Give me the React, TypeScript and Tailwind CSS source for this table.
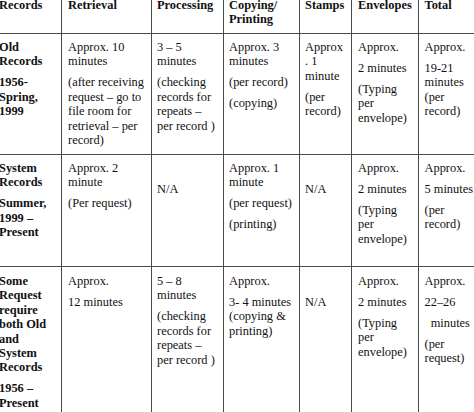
import type { ReactNode } from 'react';

type Paragraphs = string[][];

interface CellSpec {
  paras?: Paragraphs;
  na?: boolean;
}

// column widths include the 1px right rule
const COLS = [
  { width: 'w-[69px]', pad: 'pl-[6px]' },
  { width: 'w-[90px]', pad: 'pl-[6px]' },
  { width: 'w-[72px]', pad: 'pl-[5px]' },
  { width: 'w-[76px]', pad: 'pl-[5px]' },
  { width: 'w-[52px]', pad: 'pl-[5px]' },
  { width: 'w-[67px]', pad: 'pl-[6px]' },
  { width: 'w-[90px]', pad: 'pl-[5.5px]' },
];

const HEADERS: string[][] = [
  ['Records'],
  ['Retrieval'],
  ['Processing'],
  ['Copying/', 'Printing'],
  ['Stamps'],
  ['Envelopes'],
  ['Total'],
];

const ROWS: { height: string; pad: string; cells: CellSpec[] }[] = [
  {
    height: 'h-[121px]',
    pad: 'pt-[6px]',
    cells: [
      { paras: [['Old', 'Records'], ['1956-', 'Spring,', '1999']] },
      {
        paras: [
          ['Approx. 10', 'minutes'],
          ['(after receiving', 'request – go to', 'file room for', 'retrieval – per', 'record)'],
        ],
      },
      { paras: [['3 – 5', 'minutes'], ['(checking', 'records for', 'repeats –', 'per record )']] },
      { paras: [['Approx. 3', 'minutes'], ['(per record)'], ['(copying)']] },
      { paras: [['Approx', '. 1', 'minute'], ['(per', 'record)']] },
      { paras: [['Approx.'], ['2 minutes'], ['(Typing', 'per', 'envelope)']] },
      { paras: [['Approx.'], ['19-21', 'minutes', '(per', 'record)']] },
    ],
  },
  {
    height: 'h-[112px]',
    pad: 'pt-[6px]',
    cells: [
      { paras: [['System', 'Records'], ['Summer,', '1999 –', 'Present']] },
      { paras: [['Approx. 2', 'minute'], ['(Per request)']] },
      { na: true },
      { paras: [['Approx. 1', 'minute'], ['(per request)'], ['(printing)']] },
      { na: true },
      { paras: [['Approx.'], ['2 minutes'], ['(Typing', 'per', 'envelope)']] },
      { paras: [['Approx.'], ['5 minutes'], ['(per', 'record)']] },
    ],
  },
  {
    height: 'h-[160px]',
    pad: 'pt-[7px]',
    cells: [
      {
        paras: [
          ['Some', 'Request', 'require', 'both Old', 'and', 'System', 'Records'],
          ['1956 –', 'Present'],
        ],
      },
      { paras: [['Approx.'], ['12 minutes']] },
      { paras: [['5 – 8', 'minutes'], ['(checking', 'records for', 'repeats –', 'per record )']] },
      { paras: [['Approx.'], ['3- 4 minutes', '(copying &', 'printing)']] },
      { na: true },
      { paras: [['Approx.'], ['2 minutes'], ['(Typing', 'per', 'envelope)']] },
      { paras: [['Approx.'], ['22–26'], ['\u00a0\u00a0minutes'], ['(per', 'request)']] },
    ],
  },
];

function Lines({ lines }: { lines: string[] }) {
  return (
    <p className="whitespace-pre">
      {lines.map((line, i) => (
        <span key={i} className="block">
          {line}
        </span>
      ))}
    </p>
  );
}

function Cell({ col, children, bold }: { col: number; children: ReactNode; bold?: boolean }) {
  const spec = COLS[col];
  return (
    <div
      className={`${spec.width} ${spec.pad} shrink-0 border-r border-[#4a4a4a] ${
        bold ? 'font-bold' : ''
      }`}
    >
      {children}
    </div>
  );
}

export default function App() {
  return (
    <div className="h-[412px] w-[474px] overflow-hidden bg-white font-['Liberation_Serif','Times_New_Roman',serif] text-[12.4px] leading-[14.4px] text-[#111]">
      <div className="-ml-[7px] -mt-[8px] w-[600px]">
        <div className="flex h-[42px] border-b border-[#4a4a4a] pt-[5.5px] font-bold">
          {HEADERS.map((lines, col) => (
            <Cell key={col} col={col} bold>
              <Lines lines={lines} />
            </Cell>
          ))}
        </div>

        {ROWS.map((row, r) => (
          <div key={r} className={`flex ${row.height} border-b border-[#4a4a4a]`}>
            {row.cells.map((cell, col) => (
              <Cell key={col} col={col} bold={col === 0}>
                <div className={`${row.pad} flex flex-col gap-[6.5px]`}>
                  {cell.na ? (
                    <p className="mt-[20.5px]">N/A</p>
                  ) : (
                    cell.paras?.map((lines, i) => <Lines key={i} lines={lines} />)
                  )}
                </div>
              </Cell>
            ))}
          </div>
        ))}
      </div>
    </div>
  );
}
